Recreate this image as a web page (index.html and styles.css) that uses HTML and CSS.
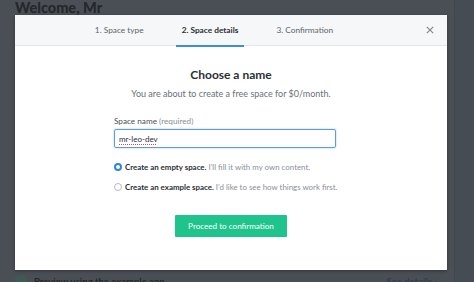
FILE: index.html
```html
<!DOCTYPE html>
<html>
<head>
<meta charset="utf-8">
<link rel="stylesheet" href="styles.css">
</head>
<body>
<div class="page">
  <div class="page-main">
    <h1 class="welcome">Welcome, Mr</h1>
    <div class="bottom-row">
      <span class="preview-icon"></span>
      <span class="preview-text">Preview using the example app</span>
      <span class="see-details">See details ›</span>
    </div>
  </div>
  <div class="page-side"></div>
</div>

<div class="modal">
  <div class="modal-header">
    <div class="tabs">
      <div class="tab">1. Space type</div>
      <div class="tab active">2. Space details</div>
      <div class="tab">3. Confirmation</div>
    </div>
    <div class="close">
      <svg width="8" height="8" viewBox="0 0 8 8"><path d="M0.8 0.8L7.2 7.2M7.2 0.8L0.8 7.2" stroke="#80868d" stroke-width="1.1" fill="none"/></svg>
    </div>
  </div>
  <div class="modal-body">
    <h2 class="title">Choose a name</h2>
    <p class="subtitle">You are about to create a free space for $0/month.</p>
    <div class="form">
      <label class="label">Space name <span class="req">(required)</span></label>
      <div class="input"><span class="input-text">mr-leo-dev</span></div>
      <div class="options">
        <div class="option"><span class="radio checked"></span><span class="opt-text"><b>Create an empty space.</b> I’ll fill it with my own content.</span></div>
        <div class="option"><span class="radio"></span><span class="opt-text"><b>Create an example space.</b> I’d like to see how things work first.</span></div>
      </div>
    </div>
    <button class="proceed">Proceed to confirmation</button>
  </div>
</div>
</body>
</html>
```

FILE: styles.css
```css
* { box-sizing: border-box; }
html, body { margin: 0; padding: 0; }
body {
  width: 474px;
  height: 282px;
  overflow: hidden;
  background: #4a4f55;
  font-family: Lato, "Noto Sans", sans-serif;
  position: relative;
}
.page {
  display: flex;
  height: 282px;
}
.page-main {
  flex: 1;
  display: flex;
  flex-direction: column;
  justify-content: space-between;
  padding: 0 0 0 15px;
}
.page-side {
  width: 20px;
  background: #464c53;
  border-left: 1px solid #42474d;
}
.welcome {
  margin: 0;
  font-size: 14.5px;
  font-weight: 900;
  color: #24282c;
  line-height: 16px;
}
.bottom-row {
  display: flex;
  align-items: center;
  height: 14px;
  margin-bottom: -6px;
  padding-right: 17px;
}
.preview-icon {
  width: 12px;
  height: 12px;
  border-radius: 50%;
  background: #3f5a52;
  margin-right: 7px;
}
.preview-text {
  font-size: 9.5px;
  font-weight: 700;
  color: #23272b;
  flex: 1;
}
.see-details {
  font-size: 9.5px;
  font-weight: 700;
  color: #2a3c52;
}

.modal {
  position: absolute;
  left: 15px;
  top: 15px;
  width: 432px;
  height: 255px;
  background: #fff;
  box-shadow: 0 1px 3px rgba(0,0,0,0.35);
  display: flex;
  flex-direction: column;
}
.modal-header {
  height: 31px;
  background: #f5f7f9;
  border-bottom: 1.5px solid #e3e7eb;
  display: flex;
}
.tabs {
  flex: 1;
  display: flex;
  justify-content: center;
  gap: 26px;
}
.tab {
  padding: 0 6px;
  font-size: 8.3px;
  color: #5d646b;
  display: flex;
  align-items: center;
  border-bottom: 2px solid transparent;
  margin-bottom: -1.5px;
}
.tab.active {
  font-weight: 700;
  color: #2a2f35;
  border-bottom-color: #3c8ed8;
}
.close {
  width: 34px;
  display: flex;
  align-items: center;
  justify-content: center;
}
.modal-body {
  display: flex;
  flex-direction: column;
  align-items: center;
  padding-top: 21px;
}
.title {
  margin: 0;
  font-size: 12px;
  font-weight: 700;
  color: #2a2f35;
  line-height: 16px;
}
.subtitle {
  margin: 5px 0 0;
  font-size: 9px;
  color: #6a7178;
  line-height: 12px;
}
.form {
  width: 222px;
  margin-top: 16px;
  margin-right: 12px;
}
.label {
  display: block;
  font-size: 8.2px;
  color: #4b5158;
  line-height: 11px;
}
.req { color: #8a9097; }
.input {
  margin-top: 2px;
  height: 19px;
  border: 1.5px solid #5b9de0;
  border-radius: 2px;
  box-shadow: 0 0 2px rgba(91,157,224,0.6);
  display: flex;
  align-items: center;
  padding-left: 4px;
}
.input-text {
  font-size: 8px;
  color: #2a2f35;
  text-decoration: underline dotted #e04848;
  text-underline-offset: 2px;
}
.options {
  margin-top: 13px;
  display: flex;
  flex-direction: column;
  gap: 8px;
}
.option {
  display: flex;
  align-items: center;
  white-space: nowrap;
  height: 12px;
}
.radio {
  width: 8px;
  height: 8px;
  border-radius: 50%;
  border: 1px solid #b4b9be;
  background: #fff;
  margin-right: 3px;
  flex: none;
}
.radio.checked {
  border: 2.5px solid #2f86dd;
  background: #fff;
}
.opt-text {
  font-size: 7.9px;
  color: #8a9097;
}
.opt-text b {
  color: #2a2f35;
  font-weight: 700;
}
.proceed {
  margin-top: 22px;
  width: 112px;
  height: 22px;
  border: 0;
  border-radius: 1px;
  background: #1fc48c;
  color: #fff;
  font-family: Lato, "Noto Sans", sans-serif;
  font-size: 8.1px;
  padding: 0;
}
```
